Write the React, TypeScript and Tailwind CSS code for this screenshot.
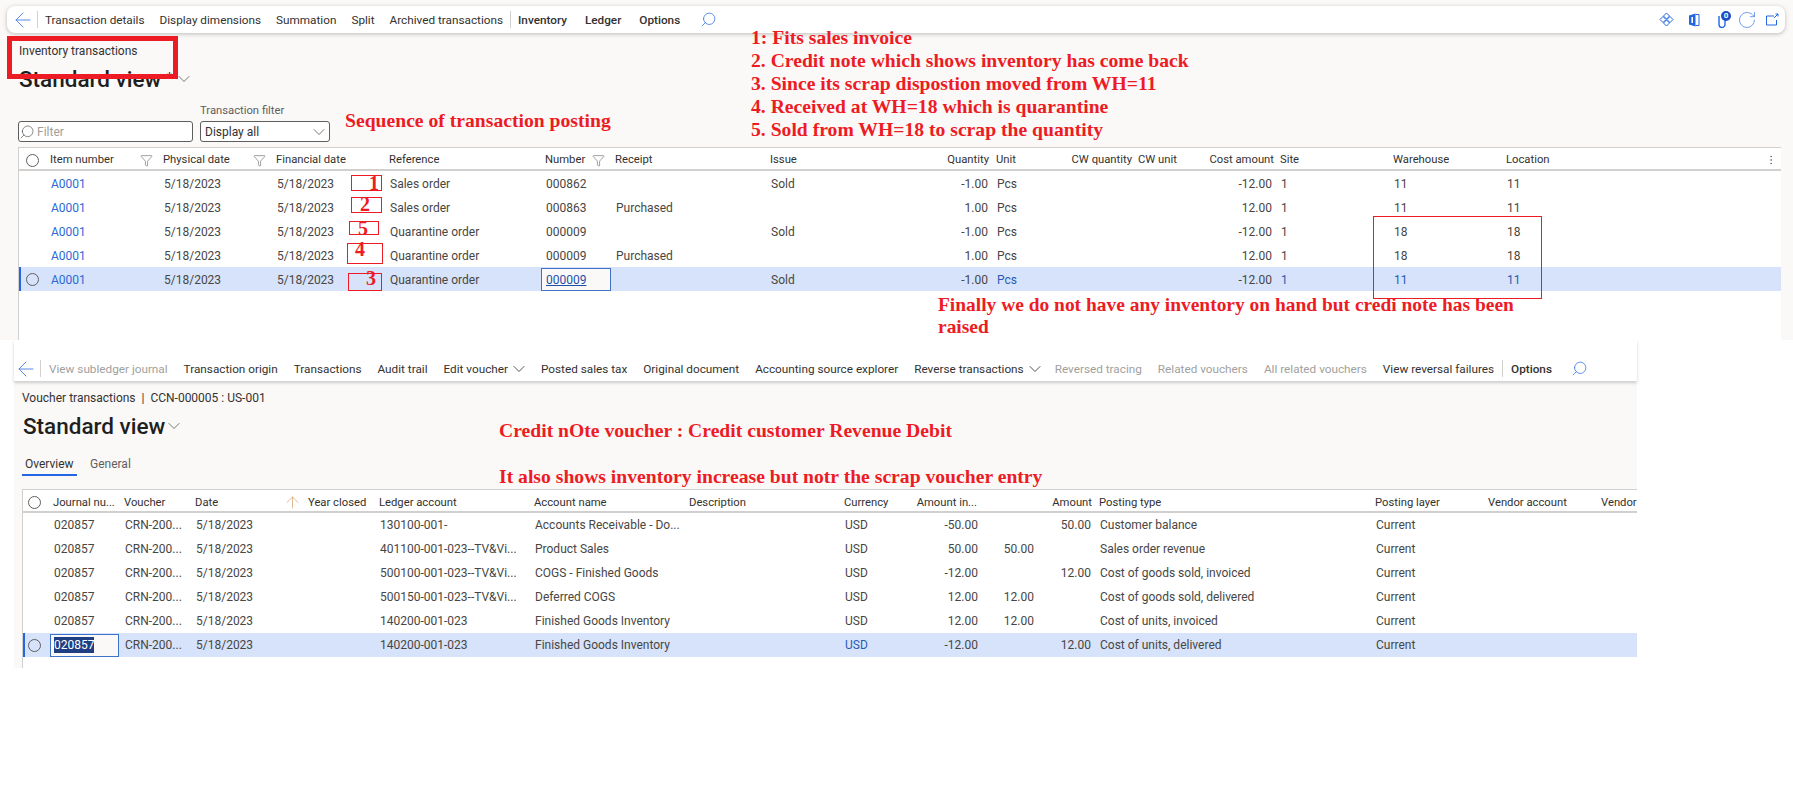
import { ArrowLeft, ArrowUp, ChevronDown, Filter, MoreVertical, RotateCw, Search } from 'lucide-react';

// Grid templates: one per table, shared by the header and the rows.
const GRID_INV = 'grid grid-cols-[31px_113px_113px_113px_156px_70px_155px_110px_116px_64px_78px_62px_80px_113px_113px_1fr]';
const GRID_VOU = 'grid grid-cols-[30px_71px_71px_113px_71px_155px_155px_155px_56px_84px_56px_59px_276px_113px_113px_36px]';
const RED = 'absolute font-["Liberation_Serif",serif] font-bold text-[#ed1c24] whitespace-nowrap';

const TOP_ITEMS = ['Transaction details', 'Display dimensions', 'Summation', 'Split', 'Archived transactions'];
const TOP_BOLD = ['Inventory', 'Ledger', 'Options'];

const INV_ROWS = [
  { ref: 'Sales order', num: '000862', receipt: '', issue: 'Sold', qty: '-1.00', cost: '-12.00', wh: '11' },
  { ref: 'Sales order', num: '000863', receipt: 'Purchased', issue: '', qty: '1.00', cost: '12.00', wh: '11' },
  { ref: 'Quarantine order', num: '000009', receipt: '', issue: 'Sold', qty: '-1.00', cost: '-12.00', wh: '18' },
  { ref: 'Quarantine order', num: '000009', receipt: 'Purchased', issue: '', qty: '1.00', cost: '12.00', wh: '18' },
  { ref: 'Quarantine order', num: '000009', receipt: '', issue: 'Sold', qty: '-1.00', cost: '-12.00', wh: '11' },
];

const VOU_ROWS = [
  { led: '130100-001-', acc: 'Accounts Receivable - Do...', a1: '-50.00', a2: '', a3: '50.00', post: 'Customer balance' },
  { led: '401100-001-023--TV&Vi...', acc: 'Product Sales', a1: '50.00', a2: '50.00', a3: '', post: 'Sales order revenue' },
  { led: '500100-001-023--TV&Vi...', acc: 'COGS - Finished Goods', a1: '-12.00', a2: '', a3: '12.00', post: 'Cost of goods sold, invoiced' },
  { led: '500150-001-023--TV&Vi...', acc: 'Deferred COGS', a1: '12.00', a2: '12.00', a3: '', post: 'Cost of goods sold, delivered' },
  { led: '140200-001-023', acc: 'Finished Goods Inventory', a1: '12.00', a2: '12.00', a3: '', post: 'Cost of units, invoiced' },
  { led: '140200-001-023', acc: 'Finished Goods Inventory', a1: '-12.00', a2: '', a3: '12.00', post: 'Cost of units, delivered' },
];

// red hand-drawn boxes over the Financial date / Reference gap
const MARKS = [
  { n: '1', box: 'left-[351px] top-[175px] w-[31px] h-[16px]', digit: 'left-[369px] top-[172px]' },
  { n: '2', box: 'left-[351px] top-[197px] w-[31px] h-[16px]', digit: 'left-[360px] top-[193px]' },
  { n: '5', box: 'left-[349px] top-[221px] w-[30px] h-[14px]', digit: 'left-[358px] top-[217px]' },
  { n: '4', box: 'left-[347px] top-[243px] w-[36px] h-[21px]', digit: 'left-[355px] top-[238px]' },
  { n: '3', box: 'left-[348px] top-[273px] w-[34px] h-[18px]', digit: 'left-[366px] top-[267px]' },
];

function Radio({ cls = 'ml-[7px]' }: { cls?: string }) {
  return <div className={`${cls} h-[13px] w-[13px] rounded-full border border-[#605e5c]`} />;
}

function Sep() {
  return <div className="h-[17px] w-px bg-[#d2d0ce]" />;
}

function Funnel() {
  return <Filter className="h-[13px] w-[13px] text-[#605e5c]" strokeWidth={1.1} />;
}

function Flipped() {
  return <Search className="h-[17px] w-[17px] -scale-x-100 text-[#2266e3]" strokeWidth={1} />;
}

function Diamond() {
  return (
    <svg width="15" height="15" viewBox="0 0 15 15" fill="none" stroke="#2266e3" strokeWidth="1">
      <path d="M7.5 1 10.5 4 7.5 7 4.5 4Z" />
      <path d="M4 4.5 7 7.5 4 10.5 1 7.5Z" />
      <path d="M11 4.5 14 7.5 11 10.5 8 7.5Z" />
      <path d="M7.5 8 10.5 11 7.5 14 4.5 11Z" />
    </svg>
  );
}

function Office() {
  return (
    <svg width="12" height="14" viewBox="0 0 12 14">
      <path d="M1 2.5 7.5 .5v13L1 11.5Z" fill="#2266e3" />
      <path d="M7.5 1.5H11v11H7.5" fill="none" stroke="#2266e3" strokeWidth="1" />
      <path d="M4.2 4v6" stroke="#fff" strokeWidth="1.6" />
    </svg>
  );
}

function Badge() {
  return (
    <div className="relative h-[18px] w-[13px]">
      <svg width="8" height="14" viewBox="0 0 8 14" className="absolute left-0 top-[3px]" fill="none" stroke="#2266e3" strokeWidth="1.4">
        <path d="M1 2v8.5a3 3 0 0 0 6 0V4" />
      </svg>
      <div className="absolute left-[3px] top-0 flex h-[10px] w-[10px] items-center justify-center rounded-full bg-[#1b4fc4] text-[8px] font-bold leading-none text-white">0</div>
    </div>
  );
}

function OpenBox() {
  return (
    <svg width="14" height="14" viewBox="0 0 14 14" fill="none" stroke="#2266e3" strokeWidth="1">
      <path d="M9 3H1.5v9h10V7" />
      <path d="M9 5 13 1M10.5 1H13v2.5" />
    </svg>
  );
}

function InventoryTable() {
  return (
    <div className="ml-[18px] h-[193px] w-[1763px] border-l border-t border-[#d2d0ce] bg-white">
      <div className={`${GRID_INV} h-[23px] items-center border-b-2 border-[#d2d0ce] pt-[3px] text-[11.25px] text-[#323130]`}>
        <Radio />
        <div className="flex items-center justify-between pr-[10px]"><span>Item number</span><Funnel /></div>
        <div className="flex items-center justify-between pr-[10px]"><span>Physical date</span><Funnel /></div>
        <div>Financial date</div>
        <div>Reference</div>
        <div className="flex items-center justify-between pr-[10px]"><span>Number</span><Funnel /></div>
        <div>Receipt</div>
        <div>Issue</div>
        <div className="pr-[7px] text-right">Quantity</div>
        <div>Unit</div>
        <div className="pr-[6px] text-right">CW quantity</div>
        <div>CW unit</div>
        <div className="pr-[6px] text-right">Cost amount</div>
        <div>Site</div>
        <div>Warehouse</div>
        <div className="flex items-center justify-between pr-[4px]"><span>Location</span><MoreVertical className="h-[12px] w-[12px] text-[#605e5c]" strokeWidth={1.2} /></div>
      </div>
      {INV_ROWS.map((r, i) => {
        const sel = i === 4;
        const tail = sel ? 'pl-px text-[#2a5bb5]' : 'pl-px';
        return (
          <div key={i} className={`${GRID_INV} h-[24px] items-center pt-px text-[#484644] ${sel ? 'bg-[#d6e3fa] shadow-[inset_2px_0_0_#2266e3]' : ''}`}>
            {sel ? <Radio /> : <div />}
            <div className="pl-px text-[#2b6ad6]">A0001</div>
            <div className="pl-px">5/18/2023</div>
            <div className="pl-px">5/18/2023</div>
            <div className="pl-px">{r.ref}</div>
            {sel ? (
              <div className="-ml-[4px] flex h-[23px] w-[70px] items-center border border-[#3f72c9] bg-[#faf9f8] pl-[4px] text-[#1e4fa8] underline">{r.num}</div>
            ) : (
              <div className="pl-px">{r.num}</div>
            )}
            <div className="pl-px">{r.receipt}</div>
            <div className="pl-px">{r.issue}</div>
            <div className="pr-[8px] text-right">{r.qty}</div>
            <div className={tail}>Pcs</div>
            <div />
            <div />
            <div className="pr-[8px] text-right">{r.cost}</div>
            <div className={tail}>1</div>
            <div className={tail}>{r.wh}</div>
            <div className={tail}>{r.wh}</div>
          </div>
        );
      })}
    </div>
  );
}

function VoucherTable() {
  return (
    <div className="ml-[8px] h-[179px] w-[1615px] overflow-hidden border-l border-t border-[#d2d0ce] bg-white">
      <div className={`${GRID_VOU} h-[23px] items-center whitespace-nowrap border-b-2 border-[#d2d0ce] pt-[3px] text-[11.25px] text-[#323130]`}>
        <Radio cls="ml-[5px]" />
        <div>Journal nu...</div>
        <div>Voucher</div>
        <div className="flex items-center justify-between pr-[6px]"><span>Date</span><ArrowUp className="h-[19px] w-[19px] text-[#d8a878]" strokeWidth={1} /></div>
        <div>Year closed</div>
        <div>Ledger account</div>
        <div>Account name</div>
        <div>Description</div>
        <div>Currency</div>
        <div className="pr-[7px] text-right">Amount in...</div>
        <div />
        <div className="pr-[7px] text-right">Amount</div>
        <div>Posting type</div>
        <div>Posting layer</div>
        <div>Vendor account</div>
        <div>Vendor</div>
      </div>
      {VOU_ROWS.map((r, i) => {
        const sel = i === 5;
        return (
          <div key={i} className={`${GRID_VOU} h-[24px] items-center whitespace-nowrap text-[#484644] ${sel ? 'bg-[#d6e3fa] shadow-[inset_2px_0_0_#2266e3]' : ''}`}>
            {sel ? <Radio cls="ml-[5px]" /> : <div />}
            {sel ? (
              <div className="-ml-[3px] flex h-[23px] w-[69px] items-center border border-[#3f72c9] bg-[#faf9f8] pl-[3px]"><span className="bg-[#1f3f82] text-white">020857</span></div>
            ) : (
              <div className="pl-px">020857</div>
            )}
            <div className="pl-px">CRN-200...</div>
            <div className="pl-px">5/18/2023</div>
            <div />
            <div className="pl-px">{r.led}</div>
            <div className="pl-px">{r.acc}</div>
            <div />
            <div className={sel ? 'pl-px text-[#2a5bb5]' : 'pl-px'}>USD</div>
            <div className="pr-[6px] text-right">{r.a1}</div>
            <div className="pr-[6px] text-right">{r.a2}</div>
            <div className="pr-[8px] text-right">{r.a3}</div>
            <div className="pl-px">{r.post}</div>
            <div className="pl-px">Current</div>
            <div />
            <div />
          </div>
        );
      })}
    </div>
  );
}

export default function App() {
  return (
    <div className='relative h-[787px] w-[1793px] overflow-hidden bg-white font-["Roboto",sans-serif] text-[12px] leading-4 text-[#323130]'>
      {/* Inventory transactions */}
      <div className="h-[340px] bg-[#faf9f8] pt-[6px]">
        <div className="ml-[7px] flex h-[27px] w-[1778px] items-center rounded-lg bg-white pl-[4px] pr-[6px] text-[11.75px] shadow-[0_1px_4px_rgba(0,0,0,0.25)]">
          <ArrowLeft className="h-6 w-6 text-[#5a8ae8]" strokeWidth={1} />
          <div className="ml-[2px] mr-[7px]"><Sep /></div>
          <div className="flex gap-[15px]">
            {TOP_ITEMS.map((t) => <span key={t}>{t}</span>)}
          </div>
          <div className="mx-[7px]"><Sep /></div>
          <div className="flex gap-[18px] font-medium">
            {TOP_BOLD.map((t) => <span key={t}>{t}</span>)}
          </div>
          <div className="ml-[20px]"><Flipped /></div>
          <div className="ml-auto flex items-center">
            <Diamond />
            <div className="ml-[14px]"><Office /></div>
            <div className="ml-[18px]"><Badge /></div>
            <RotateCw className="ml-[6px] h-5 w-5 text-[#5a8ae8]" strokeWidth={1} />
            <div className="ml-[8px]"><OpenBox /></div>
          </div>
        </div>
        <div className="ml-[19px] mt-[10px] h-4">Inventory transactions</div>
        <div className="ml-[19px] mt-[4px] flex h-8 items-center">
          <span className="text-[22.5px] font-medium leading-8 text-[#201f1e]">Standard view <sup className="text-[12px]">*</sup></span>
          <ChevronDown className="ml-[2px] h-5 w-5 text-[#605e5c]" strokeWidth={1} />
        </div>
        <div className="ml-[18px] mt-[9px] flex items-end gap-[7px]">
          <div className="flex h-[21px] w-[175px] items-center gap-[2px] rounded-[3px] border border-[#605e5c] bg-white">
            <Search className="h-4 w-4 -scale-x-100 text-[#605e5c]" strokeWidth={1.1} />
            <span className="text-[#a19f9d]">Filter</span>
          </div>
          <div>
            <div className="mb-[3px] h-[14px] text-[11.25px] leading-[14px] text-[#605e5c]">Transaction filter</div>
            <div className="flex h-[21px] w-[130px] items-center justify-between rounded-[3px] border border-[#605e5c] bg-white pl-[4px]">
              <span>Display all</span>
              <ChevronDown className="h-5 w-5 text-[#605e5c]" strokeWidth={1} />
            </div>
          </div>
        </div>
        <div className="mt-[5px]"><InventoryTable /></div>
      </div>

      {/* Voucher transactions */}
      <div className="ml-[14px] h-[328px] w-[1623px] bg-[#faf9f8]">
        <div className="flex h-[41px] items-center bg-white pt-[16px] text-[11.75px] shadow-[0_2px_3px_rgba(0,0,0,0.18)]">
          <ArrowLeft className="h-6 w-6 text-[#5a8ae8]" strokeWidth={1} />
          <div className="ml-[2px] mr-[8px]"><Sep /></div>
          <div className="flex items-center gap-4">
            <span className="text-[#a19f9d]">View subledger journal</span>
            <span>Transaction origin</span>
            <span>Transactions</span>
            <span>Audit trail</span>
            <span className="flex items-center">Edit voucher <ChevronDown className="-my-1 -mr-[4px] ml-[1px] h-5 w-5" strokeWidth={1} /></span>
            <span>Posted sales tax</span>
            <span>Original document</span>
            <span>Accounting source explorer</span>
            <span className="flex items-center">Reverse transactions <ChevronDown className="-my-1 -mr-[6px] ml-[1px] h-5 w-5" strokeWidth={1} /></span>
            <span className="text-[#a19f9d]">Reversed tracing</span>
            <span className="text-[#a19f9d]">Related vouchers</span>
            <span className="text-[#a19f9d]">All related vouchers</span>
            <span>View reversal failures</span>
          </div>
          <div className="mx-[8px]"><Sep /></div>
          <span className="font-medium">Options</span>
          <div className="ml-[19px]"><Flipped /></div>
        </div>
        <div className="ml-[8px] mt-[9px] h-4">Voucher transactions&nbsp;&nbsp;|&nbsp;&nbsp;CCN-000005 : US-001</div>
        <div className="ml-[9px] mt-[4px] flex h-8 items-center">
          <span className="text-[22.5px] font-medium leading-8 text-[#201f1e]">Standard view</span>
          <ChevronDown className="-ml-[1px] h-5 w-5 text-[#605e5c]" strokeWidth={1} />
        </div>
        <div className="ml-[8px] mt-[14px] flex h-[20px] gap-[13px]">
          <span className="h-[20px] w-[55px] border-b-2 border-[#2266e3] pl-[3px]">Overview</span>
          <span className="text-[#605e5c]">General</span>
        </div>
        <div className="mt-[13px]"><VoucherTable /></div>
      </div>

      {/* annotations over the screenshots */}
      <div className="pointer-events-none absolute left-[7px] top-[36px] h-[43px] w-[171px] border-[5px] border-[#ed1c24]" />
      <div className={`${RED} left-[751px] top-[26px] text-[19.65px] leading-[23.1px]`}>
        <div>1: Fits sales invoice</div>
        <div>2. Credit note which shows inventory has come back</div>
        <div>3. Since its scrap dispostion moved from WH=11</div>
        <div>4. Received at WH=18 which is quarantine</div>
        <div>5. Sold from WH=18 to scrap the quantity</div>
      </div>
      <div className={`${RED} left-[345px] top-[109px] text-[19.65px] leading-[23px]`}>Sequence of transaction posting</div>
      {MARKS.map((m) => (
        <div key={m.n}>
          <div className={`absolute border border-[#ed1c24] ${m.box}`} />
          <div className={`${RED} text-[20px] leading-[22px] ${m.digit}`}>{m.n}</div>
        </div>
      ))}
      <div className="absolute left-[1373px] top-[216px] h-[83px] w-[169px] border border-[#ed1c24]" />
      <div className={`${RED} left-[938px] top-[294px] text-[19.45px] leading-[22px]`}>
        <div>Finally we do not have any inventory on hand but credi note has been</div>
        <div>raised</div>
      </div>
      <div className={`${RED} left-[499px] top-[419px] text-[19.65px] leading-[22px]`}>Credit nOte voucher : Credit customer Revenue Debit</div>
      <div className={`${RED} left-[499px] top-[465px] text-[19.65px] leading-[22px]`}>It also shows inventory increase but notr the scrap voucher entry</div>
    </div>
  );
}
